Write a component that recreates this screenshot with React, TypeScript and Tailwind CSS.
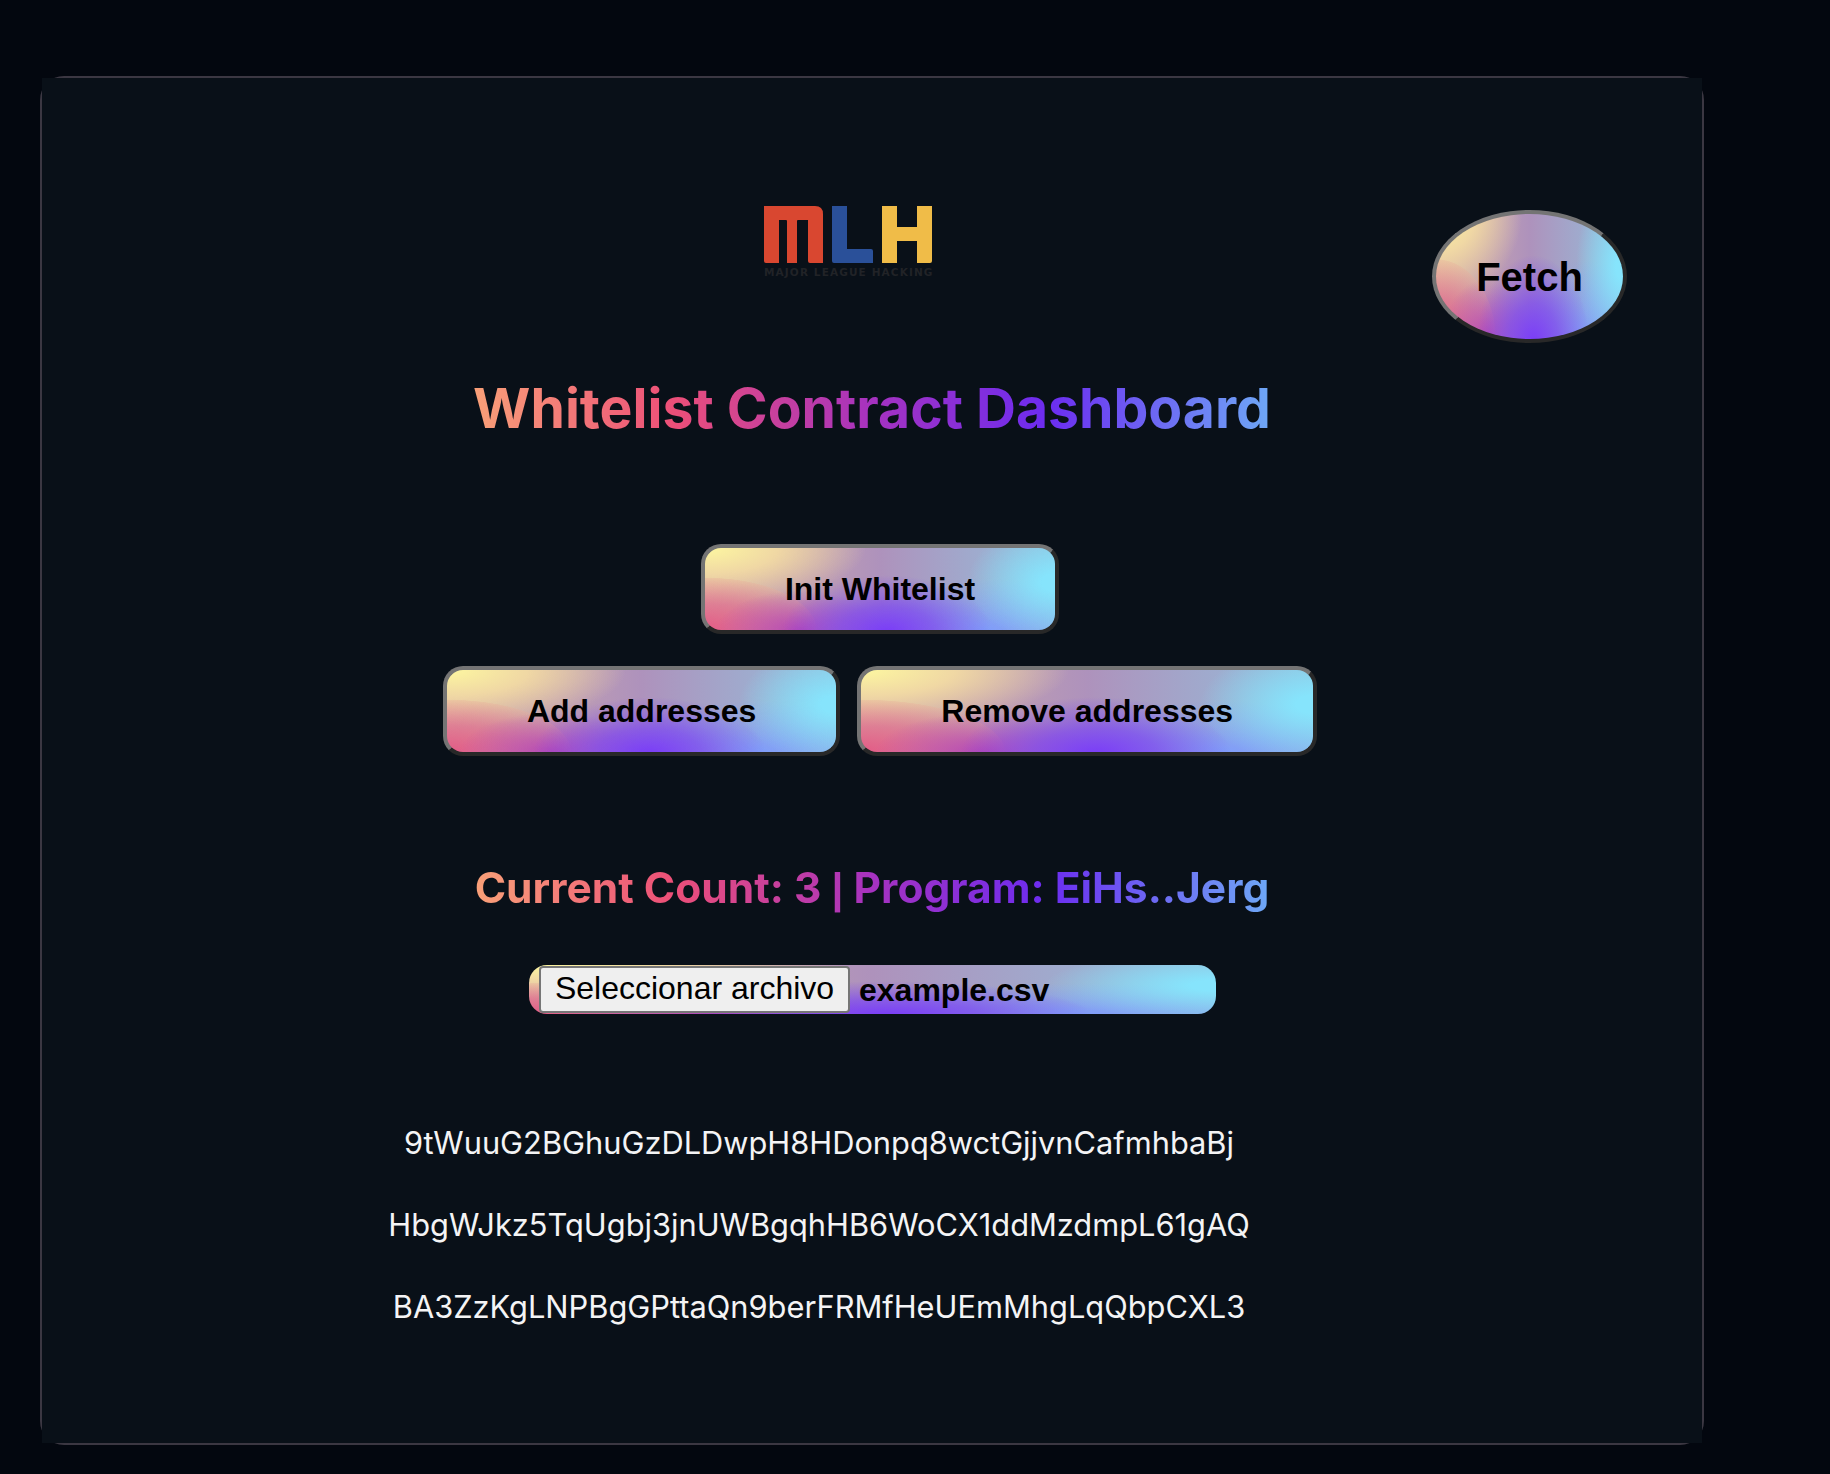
const shine =
  "bg-[radial-gradient(ellipse_30%_70%_at_52%_103%,#7a3cf8_0%,#7d48f0bb_45%,#7a3cf800_100%),radial-gradient(ellipse_24%_50%_at_27%_102%,#b545b5_0%,#b545b500_100%),radial-gradient(ellipse_25%_72%_at_100%_42%,#86e4fc_15%,#86e4fc00_100%),radial-gradient(ellipse_36%_65%_at_80%_102%,#7f9dfb_0%,#7f9dfb00_100%),radial-gradient(ellipse_32%_64%_at_0%_100%,#e25f88_6%,#e2688caa_50%,#e8ad9a55_99%,#e8ad9a00_100%),radial-gradient(ellipse_46%_70%_at_0%_0%,#fdf7a0_0%,#f0d8a4_45%,#fdf7a000_100%),linear-gradient(90deg,#d8aea4_0%,#ae92bc_50%,#93bfdc_100%)]"

const bevel = "border-4 border-t-[#747474] border-l-[#747474] border-b-[#282828] border-r-[#282828]"

const buttons = "h-[90px] rounded-[20px] px-[80px] text-[32px] font-bold text-black"

const gradientText =
  "bg-[linear-gradient(90deg,#f9a078_0%,#ec4f78_25%,#a632c0_50%,#6c2cf0_72%,#6ea8f6_100%)] bg-clip-text text-transparent [font-family:Inter,sans-serif]"

function Logo() {
  return (
    <div className="mt-[-4px] flex w-[168px] flex-col">
      <svg viewBox="0 0 168 57" className="h-[57px] w-[168px]">
        <path fill="#d94730" d="M0 0h51q8 0 8 8v49H46a2 2 0 0 1-2-2V14H34a1 1 0 0 0-1 1v42H23V15a1 1 0 0 0-1-1H15v43H2a2 2 0 0 1-2-2z" />
        <path fill="#2a5099" d="M68 0h15v43h24a2 2 0 0 1 2 2v12H70a2 2 0 0 1-2-2z" />
        <path fill="#f0bc48" d="M118 0h15v21h20V0h15v55a2 2 0 0 1-2 2h-13V35h-20v22h-15z" />
      </svg>
      <span className="mt-[3px] whitespace-nowrap text-[10.5px] leading-[12px] font-bold tracking-[1.12px] text-[#212327] [font-family:'DejaVu_Sans',sans-serif]">
        MAJOR LEAGUE HACKING
      </span>
    </div>
  )
}

export default function App() {
  return (
    <div className="min-h-[1474px] bg-[#03070f] pt-[76px] pl-[40px] [font-family:'Liberation_Sans',sans-serif]">
      <div className="h-[1369px] w-[1664px] rounded-[24px] border-2 border-[#3b3742]">
        <div className="h-full bg-[#091018] pt-[132px]">
          <div className="flex items-start justify-between pr-[75px] pl-[722px]">
            <Logo />
            <button className={`h-[133px] w-[195px] rounded-[50%] text-[40px] font-bold text-black ${bevel} ${shine}`}>
              Fetch
            </button>
          </div>

          <h1 className={`mx-auto mt-[30px] w-fit text-[55.3px] leading-[70px] font-bold ${gradientText}`}>
            Whitelist Contract Dashboard
          </h1>

          <div className="mt-[101px] flex flex-col items-center gap-[32px] pl-[16px]">
            <button className={`${buttons} ${bevel} ${shine}`}>Init Whitelist</button>
            <div className="flex gap-[17px]">
              <button className={`${buttons} ${bevel} ${shine}`}>Add addresses</button>
              <button className={`${buttons} ${bevel} ${shine}`}>Remove addresses</button>
            </div>
          </div>

          <h2 className={`mx-auto mt-[104px] w-fit text-[42.5px] leading-[56px] font-bold ${gradientText}`}>
            Current Count: 3 <span className="[font-family:'Liberation_Sans',sans-serif]">|</span> Program: EiHs..Jerg
          </h2>

          <div className={`mt-[48px] ml-[487px] flex h-[49px] w-[687px] items-center rounded-[18px] pl-[10px] ${shine}`}>
            <button className="h-[47px] w-[311px] rounded-[4px] border-2 border-[#767676] bg-[#efefef] pb-[3px] text-[32px] leading-none text-black">
              Seleccionar archivo
            </button>
            <span className="ml-[9px] text-[32px] font-bold text-black">example.csv</span>
          </div>

          <div className="mt-[106px] flex w-[1554px] flex-col items-center gap-[36px] text-[30.8px] leading-[46px] text-[#f4f4f5] [font-family:Inter,sans-serif]">
            <p>9tWuuG2BGhuGzDLDwpH8HDonpq8wctGjjvnCafmhbaBj</p>
            <p>HbgWJkz5TqUgbj3jnUWBgqhHB6WoCX1ddMzdmpL61gAQ</p>
            <p>BA3ZzKgLNPBgGPttaQn9berFRMfHeUEmMhgLqQbpCXL3</p>
          </div>
        </div>
      </div>
    </div>
  )
}
